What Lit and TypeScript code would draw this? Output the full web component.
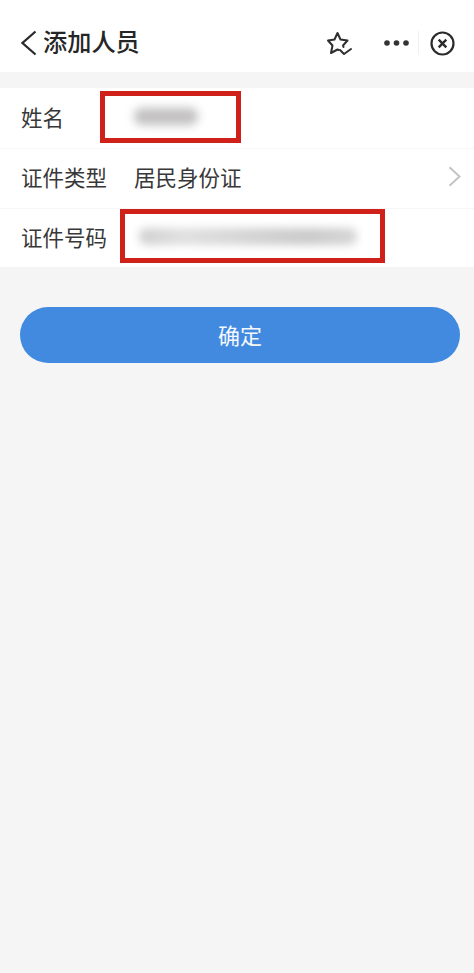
import { LitElement, html, css } from "lit";
import { customElement } from "lit/decorators.js";

@customElement("app-root")
export class AppRoot extends LitElement {
  static styles = css`
    :host {
      display: block;
      width: 474px;
      height: 973px;
      background: #f5f5f5;
      font-family: "Liberation Sans", "Noto Sans CJK SC", sans-serif;
      color: #2e2e2e;
      overflow: hidden;
    }
    .nav {
      height: 72px;
      background: #fff;
      display: flex;
      align-items: center;
      padding: 14px 19px 0 21px;
      box-sizing: border-box;
    }
    .back { width: 15px; height: 26px; margin-right: 7px; flex: none; }
    .title { font-size: 24.2px; font-weight: 500; color: #262626; line-height: 30px; flex: 1; white-space: nowrap; }
    .star { width: 28px; height: 28px; margin-right: 30px; flex: none; }
    .more { width: 27px; height: 8px; flex: none; }
    .divider { width: 1px; height: 24px; background: #f0f0f0; margin: 0 11px 0 8px; flex: none; }
    .close { width: 25px; height: 25px; flex: none; }
    .form {
      margin-top: 16px;
      background: #fff;
      position: relative;
    }
    .row {
      height: 60px;
      display: flex;
      align-items: center;
      padding: 0 13px 4px 21px;
      box-sizing: border-box;
      font-size: 21.5px;
      color: #383838;
    }
    .row + .row { border-top: 1px solid #f7f7f7; }
    .row.last { height: 59px; }
    .label { width: 113px; flex: none; white-space: nowrap; }
    .value { flex: 1; white-space: nowrap; }
    .chev { width: 13px; height: 21px; flex: none; }
    .blur { border-radius: 8px; }
    .blur.name {
      width: 64px;
      height: 17px;
      margin-left: 0;
      background: #c2c0c0;
      filter: blur(5px);
    }
    .blur.id {
      width: 218px;
      height: 17px;
      margin-left: 5px;
      background: linear-gradient(90deg, #cfcfcf, #e0e0e0 20%, #d8d8d8 40%, #cfcfcf 62%, #cacaca 78%, #d6d6d6);
      filter: blur(4px);
    }
    .mark {
      position: absolute;
      border: 5px solid #d0201a;
      box-sizing: border-box;
    }
    .mark.a { left: 100px; top: 3px; width: 141px; height: 52px; }
    .mark.b { left: 120px; top: 121px; width: 265px; height: 54px; }
    .action { padding: 40px 14px 0 20px; }
    .btn {
      height: 56px;
      border-radius: 28px;
      background: #418ae0;
      color: #f4f8fd;
      display: flex;
      align-items: center;
      justify-content: center;
      font-size: 22px;
      padding-bottom: 2px;
      box-sizing: border-box;
    }
  `;

  render() {
    return html`
      <div class="nav">
        <svg class="back" viewBox="0 0 15 26" fill="none" stroke="#2b2b2b" stroke-width="2.2">
          <path d="M14.5 1.5 1.5 13l13 11.5" />
        </svg>
        <div class="title">添加人员</div>
        <svg class="star" viewBox="0 0 28 28" fill="none" stroke="#2f2f2f" stroke-width="2" stroke-linejoin="round" stroke-linecap="round">
          <path d="M13.5 21 12.5 20.5 6 24 7.5 16.5 3 11.5 9.5 10.5 12.5 4 15.5 10.5 22.5 11.5 18 16.5 18.5 18" />
          <path d="M15 21l4 4 7-5" />
        </svg>
        <svg class="more" viewBox="0 0 27 8" fill="#333">
          <circle cx="4" cy="4" r="2.8" /><circle cx="13.5" cy="4" r="2.8" /><circle cx="23" cy="4" r="2.8" />
        </svg>
        <div class="divider"></div>
        <svg class="close" viewBox="0 0 25 25" fill="none" stroke="#2b2b2b">
          <circle cx="12.5" cy="12.5" r="11" stroke-width="2.2" />
          <path d="M8.7 8.7l7.6 7.6M16.3 8.7l-7.6 7.6" stroke-width="2.4" />
        </svg>
      </div>
      <div class="form">
        <div class="row">
          <div class="label">姓名</div>
          <div class="blur name"></div>
        </div>
        <div class="row">
          <div class="label">证件类型</div>
          <div class="value">居民身份证</div>
          <svg class="chev" viewBox="0 0 13 21" fill="none" stroke="#c4c4c4" stroke-width="2">
            <path d="M1.5 1.2l10 9.3-10 9.3" />
          </svg>
        </div>
        <div class="row last">
          <div class="label">证件号码</div>
          <div class="blur id"></div>
        </div>
        <div class="mark a"></div>
        <div class="mark b"></div>
      </div>
      <div class="action"><div class="btn">确定</div></div>
    `;
  }
}
